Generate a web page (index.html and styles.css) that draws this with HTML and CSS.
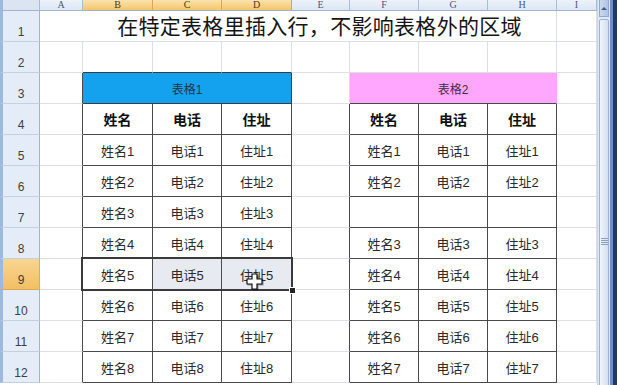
FILE: index.html
```
<!DOCTYPE html>
<html lang="zh">
<head>
  <meta charset="UTF-8" />
  <title>插入行</title>
  <link rel="stylesheet" href="styles.css">
</head>
<body>

<div class="window">
  <div class="sheet">
    <table class="grid">
      <colgroup>
        <col class="c-rh"><col class="c-a"><col class="c-b"><col class="c-c"><col class="c-d">
        <col class="c-e"><col class="c-f"><col class="c-g"><col class="c-h"><col class="c-i">
      </colgroup>
      <tr class="heads">
        <th class="corner"></th>
        <th>A</th><th class="on">B</th><th class="on">C</th><th class="on">D</th>
        <th>E</th><th>F</th><th>G</th><th>H</th><th>I</th>
      </tr>
      <tr>
        <td class="rh">1</td>
        <td class="no-r"></td>
        <td class="title" colspan="7">在特定表格里插入行，不影响表格外的区域</td>
        <td></td>
      </tr>
      <tr>
        <td class="rh">2</td>
        <td></td>
        <td class="top"></td><td class="top"></td><td class="top"></td>
        <td></td>
        <td></td><td></td><td></td>
        <td></td>
      </tr>
      <tr>
        <td class="rh">3</td>
        <td class="edge"></td>
        <td class="blue" colspan="3">表格1</td>
        <td></td>
        <td class="pink" colspan="3">表格2</td>
        <td></td>
      </tr>
      <tr>
        <td class="rh">4</td>
        <td class="edge"></td>
        <td class="t head">姓名</td><td class="t head">电话</td><td class="t head">住址</td>
        <td class="edge"></td>
        <td class="t head">姓名</td><td class="t head">电话</td><td class="t head">住址</td>
        <td></td>
      </tr>
      <tr>
        <td class="rh">5</td>
        <td class="edge"></td>
        <td class="t">姓名1</td><td class="t">电话1</td><td class="t">住址1</td>
        <td class="edge"></td>
        <td class="t">姓名1</td><td class="t">电话1</td><td class="t">住址1</td>
        <td></td>
      </tr>
      <tr>
        <td class="rh">6</td>
        <td class="edge"></td>
        <td class="t">姓名2</td><td class="t">电话2</td><td class="t">住址2</td>
        <td class="edge"></td>
        <td class="t">姓名2</td><td class="t">电话2</td><td class="t">住址2</td>
        <td></td>
      </tr>
      <tr>
        <td class="rh">7</td>
        <td class="edge"></td>
        <td class="t">姓名3</td><td class="t">电话3</td><td class="t">住址3</td>
        <td class="edge"></td>
        <td class="t"></td><td class="t"></td><td class="t"></td>
        <td></td>
      </tr>
      <tr>
        <td class="rh">8</td>
        <td class="edge"></td>
        <td class="t">姓名4</td><td class="t">电话4</td><td class="t">住址4</td>
        <td class="edge"></td>
        <td class="t">姓名3</td><td class="t">电话3</td><td class="t">住址3</td>
        <td></td>
      </tr>
      <tr>
        <td class="rh on">9</td>
        <td class="edge"></td>
        <td class="t">姓名5</td><td class="t sel">电话5</td><td class="t sel">住址5</td>
        <td class="edge"></td>
        <td class="t">姓名4</td><td class="t">电话4</td><td class="t">住址4</td>
        <td></td>
      </tr>
      <tr>
        <td class="rh">10</td>
        <td class="edge"></td>
        <td class="t">姓名6</td><td class="t">电话6</td><td class="t">住址6</td>
        <td class="edge"></td>
        <td class="t">姓名5</td><td class="t">电话5</td><td class="t">住址5</td>
        <td></td>
      </tr>
      <tr>
        <td class="rh">11</td>
        <td class="edge"></td>
        <td class="t">姓名7</td><td class="t">电话7</td><td class="t">住址7</td>
        <td class="edge"></td>
        <td class="t">姓名6</td><td class="t">电话6</td><td class="t">住址6</td>
        <td></td>
      </tr>
      <tr>
        <td class="rh">12</td>
        <td class="edge"></td>
        <td class="t">姓名8</td><td class="t">电话8</td><td class="t">住址8</td>
        <td class="edge"></td>
        <td class="t">姓名7</td><td class="t">电话7</td><td class="t">住址7</td>
        <td></td>
      </tr>
    </table>

    <!-- selected range B9:D9 -->
    <div class="selection"><span class="handle"></span></div>

    <svg class="cursor" width="17" height="17" viewBox="0 0 17 17">
      <path d="M6 1 h5 v5 h5 v5 h-5 v5 h-5 v-5 h-5 v-5 h5 z" fill="#fff" stroke="#111" stroke-width="1.2"/>
    </svg>
  </div>

  <div class="vscroll">
    <div class="arrow"><span class="tri"></span></div>
    <div class="thumb">
      <div class="grip"><i></i><i></i><i></i><i></i></div>
    </div>
  </div>
  <div class="frame"></div>
</div>

</body>
</html>
```

FILE: styles.css
```
body {
  margin: 0;
  width: 617px;
  height: 385px;
  overflow: hidden;
  background: #fff;
  font-family: 'Liberation Sans', 'Noto Sans CJK SC', sans-serif;
  color: #222;
}

.window {
  display: flex;
  height: 385px;
}

.sheet {
  position: relative;
  width: 597px;
  height: 385px;
  overflow: hidden;
}

/* grid of cells */
.grid {
  table-layout: fixed;
  width: 597px;
  border-collapse: separate;
  border-spacing: 0;
}

.c-rh { width: 40px; }
.c-a { width: 43px; }
.c-b { width: 70px; }
.c-c { width: 69px; }
.c-d { width: 70px; }
.c-e { width: 58px; }
.c-f { width: 69px; }
.c-g { width: 69px; }
.c-h { width: 69px; }
.c-i { width: 40px; }

.grid tr { height: 31px; }

.grid td {
  padding: 0;
  border-right: 1px solid #dcdfe5;
  border-bottom: 1px solid #dcdfe5;
  text-align: center;
  vertical-align: middle;
  font-size: 13px;
  color: #2a2a2a;
  white-space: nowrap;
  overflow: hidden;
}

/* column headers */
.grid tr.heads { height: 11px; }

.heads th {
  padding: 0;
  height: 10px;
  border-right: 1px solid #a8bcd6;
  border-bottom: 1px solid #9fb4cf;
  background: linear-gradient(#edf2fa, #dce6f4);
  font-family: 'Liberation Serif', serif;
  font-weight: normal;
  font-size: 10px;
  line-height: 10px;
  vertical-align: top;
  color: #4a5a78;
}

.heads th.on {
  background: linear-gradient(#fbe3b0, #f5c66a);
  border-right-color: #d9a94f;
  color: #4d3b1a;
}

.heads th.corner {
  border-left: 3px solid #9fb8e2;
  background: #dbe4f1;
}

/* row headers */
.grid td.rh {
  border-left: 3px solid #9fb8e2;
  border-right: 1px solid #9fb4cf;
  border-bottom: 1px solid #c2d0e3;
  background: #e4ecf7;
  font-size: 12px;
  color: #3a3f48;
  vertical-align: bottom;
  padding-bottom: 3px;
  line-height: 12px;
}

.grid td.rh.on {
  background: linear-gradient(#f8d592, #f3bf64);
  border-bottom-color: #d9a94f;
}

.grid td.no-r { border-right: none; }

.grid td.title {
  font-family: 'Noto Sans CJK SC', sans-serif;
  font-size: 21px;
  color: #151515;
  vertical-align: bottom;
  line-height: 24px;
  padding-bottom: 4px;
  letter-spacing: 0.3px;
}

/* table borders */
.grid td.top { border-bottom-color: #3c3c3c; }
.grid td.edge { border-right-color: #4a4a4a; }

.grid td.t {
  border-right-color: #4a4a4a;
  border-bottom-color: #4a4a4a;
}

.grid td.head {
  font-weight: bold;
  font-size: 14px;
  color: #111;
}

.grid td.blue {
  background: #14a2ee;
  border-right-color: #3c3c3c;
  border-bottom-color: #3c3c3c;
  font-size: 12px;
  color: #24324a;
}

.grid td.pink {
  background: #ffa6ff;
  border-right-color: #ffa6ff;
  border-bottom-color: #4a4a4a;
  font-size: 12px;
  color: #4a2a4a;
}

.grid td.sel { background: #e8eaf1; }

/* selection overlay */
.selection {
  position: absolute;
  left: 81px;
  top: 257px;
  width: 208px;
  height: 30px;
  border: 2px solid #3a3a3a;
}

.handle {
  position: absolute;
  right: -5px;
  bottom: -5px;
  width: 5px;
  height: 5px;
  background: #222;
  border: 1px solid #fff;
}

.cursor {
  position: absolute;
  left: 246px;
  top: 273px;
  filter: drop-shadow(1px 1px 0 rgba(0,0,0,0.35));
}

/* scrollbar */
.vscroll {
  width: 13px;
  height: 385px;
  background: #dfe8f5;
  border-left: 1px solid #c9d6e8;
  box-sizing: border-box;
  display: flex;
  flex-direction: column;
  align-items: center;
  overflow: hidden;
  padding: 0 1px;
}

.arrow {
  width: 100%;
  height: 17px;
  flex: none;
  background: linear-gradient(to right, #cbd9ee, #aec4e4);
  border: 1px solid #8fa9cf;
  border-top: none;
  box-sizing: border-box;
  display: flex;
  justify-content: center;
  align-items: center;
}

.tri {
  width: 0;
  height: 0;
  border-left: 3px solid transparent;
  border-right: 3px solid transparent;
  border-bottom: 3px solid #3d5a86;
}

.thumb {
  flex: none;
  width: 100%;
  height: 444px;
  margin-top: 2px;
  box-sizing: border-box;
  border: 1px solid #9db3d4;
  border-radius: 2px;
  background: linear-gradient(to right, #f1f5fb, #d3dff0);
  display: flex;
  justify-content: center;
  align-items: center;
}

.grip {
  display: flex;
  flex-direction: column;
  gap: 1px;
}

.grip i {
  display: block;
  width: 7px;
  height: 1px;
  background: #8a9fbd;
}

.frame {
  width: 7px;
  height: 385px;
  background: linear-gradient(to right, #6d8fc4 0, #6d8fc4 3px, #203a66 3px);
}
```
